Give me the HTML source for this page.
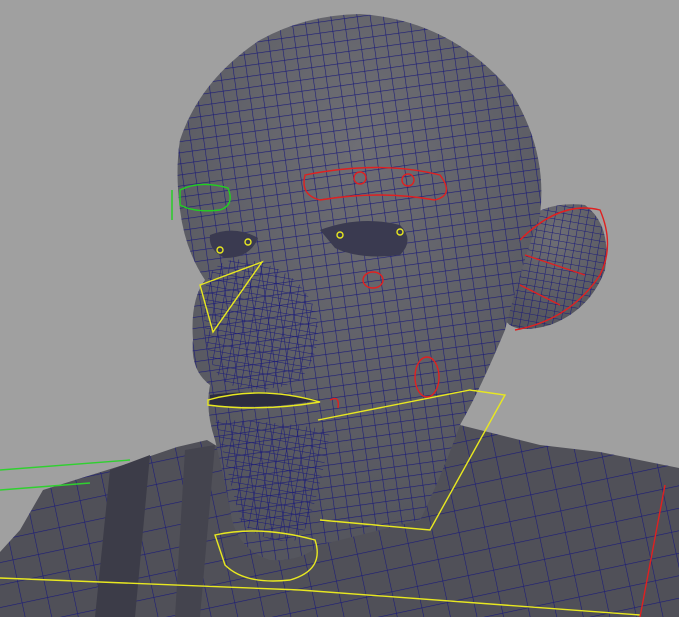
<!DOCTYPE html>
<html><head><meta charset="utf-8"><style>html,body{margin:0;padding:0;background:#a0a0a0;overflow:hidden}svg{display:block}</style></head>
<body>
<svg width="679" height="617" viewBox="0 0 679 617" xmlns="http://www.w3.org/2000/svg">
<defs>
<pattern id="g" width="13" height="11" patternUnits="userSpaceOnUse" patternTransform="rotate(-8)">
<path d="M0 0H13M0 0V11" stroke="#1c1c78" stroke-width="1.2" fill="none"/>
</pattern>
<pattern id="g2" width="8" height="7" patternUnits="userSpaceOnUse" patternTransform="rotate(10)">
<path d="M0 0H8M0 0V7" stroke="#1c1c78" stroke-width="1.1" fill="none"/>
</pattern>
<pattern id="b" width="26" height="22" patternUnits="userSpaceOnUse" patternTransform="rotate(-12)">
<path d="M0 0H26M0 0V22" stroke="#1c1c78" stroke-width="1.2" fill="none"/>
</pattern>
<radialGradient id="hg" cx="0.5" cy="0.25" r="0.7">
<stop offset="0" stop-color="#6e6e74"/><stop offset="1" stop-color="#55565e"/>
</radialGradient>
</defs>
<rect width="679" height="617" fill="#a0a0a0"/>
<path d="M0 552 L20 530 L43 490 L133 462 L177 447 L207 440 L240 460 L300 540 L420 520 L460 425 L540 445 L600 452 L679 468 L679 617 L0 617 Z" fill="#505058"/>
<path d="M0 552 L20 530 L43 490 L133 462 L177 447 L207 440 L240 460 L300 540 L420 520 L460 425 L540 445 L600 452 L679 468 L679 617 L0 617 Z" fill="url(#b)"/>
<path d="M110 470 L150 455 L135 617 L95 617 Z" fill="#3c3c48"/>
<path d="M185 450 L215 445 L200 617 L175 617 Z" fill="#44444e"/>
<path d="M515 230 Q540 200 585 205 Q612 225 605 270 Q590 310 550 325 Q515 335 505 320 Z" fill="url(#hg)"/>
<path d="M515 230 Q540 200 585 205 Q612 225 605 270 Q590 310 550 325 Q515 335 505 320 Z" fill="url(#g2)"/>
<path d="M360 14 Q450 20 510 90 Q548 150 540 215 Q520 270 505 330 Q480 390 460 425 Q440 480 420 520 Q360 535 320 545 Q300 562 270 560 Q240 550 232 520 Q225 480 215 440 Q205 410 210 385 Q190 370 193 340 Q190 300 205 280 Q185 250 180 210 Q175 170 180 140 Q200 80 260 40 Q305 15 360 14 Z" fill="url(#hg)"/>
<path d="M360 14 Q450 20 510 90 Q548 150 540 215 Q520 270 505 330 Q480 390 460 425 Q440 480 420 520 Q360 535 320 545 Q300 562 270 560 Q240 550 232 520 Q225 480 215 440 Q205 410 210 385 Q190 370 193 340 Q190 300 205 280 Q185 250 180 210 Q175 170 180 140 Q200 80 260 40 Q305 15 360 14 Z" fill="url(#g)"/>
<path d="M205 290 Q210 255 250 260 Q300 270 315 310 Q325 350 300 380 Q270 395 230 385 Q200 370 205 290 Z" fill="url(#g2)"/>
<path d="M215 420 Q270 420 330 430 Q320 500 300 540 Q260 545 240 520 Z" fill="url(#g2)"/>
<path d="M320 230 Q360 215 400 225 Q415 240 400 255 Q360 260 335 248 Z" fill="#3a3a50"/>
<path d="M210 235 Q235 225 258 238 Q250 258 225 258 Q208 250 210 235 Z" fill="#3a3a50"/>
<path d="M210 395 Q260 388 318 400 Q270 410 210 405 Z" fill="#2c2c40"/>
<g fill="none" stroke-width="1.4">
<path d="M305 175 Q380 160 440 175 Q455 195 435 200 Q380 190 320 200 Q300 195 305 175 Z" stroke="#e02020"/>
<circle cx="360" cy="178" r="6" stroke="#e02020"/><circle cx="408" cy="180" r="6" stroke="#e02020"/>
<path d="M180 190 Q200 180 228 188 Q235 205 220 210 Q195 213 180 205 Z" stroke="#20d020"/>
<path d="M172 190 V220" stroke="#20d020"/>
<path d="M0 470 L130 460 M0 490 L90 483" stroke="#30d030"/>
<path d="M200 285 L262 262 L213 332 Z" stroke="#e8e820"/>
<path d="M208 400 Q260 385 320 402 Q260 412 208 405 Z" stroke="#e8e820"/>
<path d="M318 420 L470 390 L505 395 L430 530 L320 520" stroke="#e8e820"/>
<path d="M215 535 Q260 525 315 540 Q325 570 290 580 Q245 585 225 565 Z" stroke="#e8e820"/>
<path d="M0 578 L300 590 L640 615" stroke="#e8e820"/>
<ellipse cx="427" cy="377" rx="12" ry="20" stroke="#e02020"/>
<ellipse cx="373" cy="280" rx="10" ry="8" stroke="#e02020"/>
<path d="M520 240 Q560 200 600 210 Q615 245 600 275 Q570 320 515 330" stroke="#e02020"/>
<path d="M520 285 L560 305 M525 255 L585 275" stroke="#e02020"/>
<path d="M665 485 L640 617" stroke="#e02020"/>
<circle cx="340" cy="235" r="3" stroke="#e8e820"/><circle cx="400" cy="232" r="3" stroke="#e8e820"/>
<circle cx="220" cy="250" r="3" stroke="#e8e820"/><circle cx="248" cy="242" r="3" stroke="#e8e820"/>
<path d="M330 400 Q340 395 338 408" stroke="#e02020"/>
</g>
</svg>
</body></html>
